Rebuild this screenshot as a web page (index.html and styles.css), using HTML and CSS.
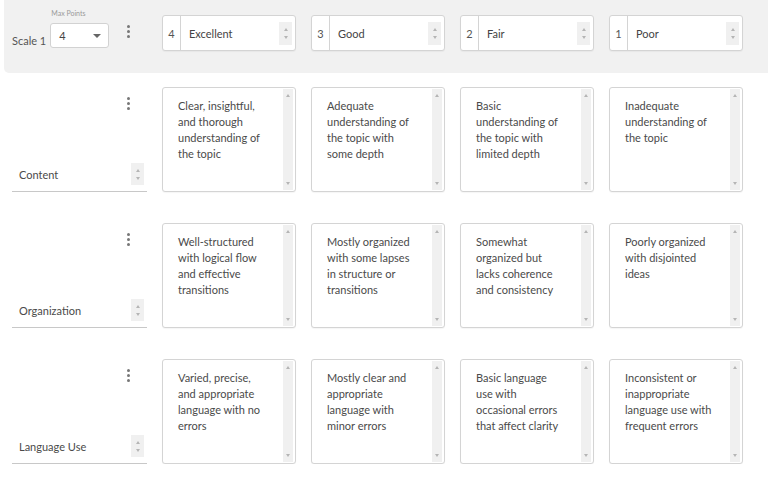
FILE: index.html
```html
<!DOCTYPE html>
<html lang="en">
<head>
    <meta charset="UTF-8">
    <title>Rubric</title>
    <link rel="stylesheet" href="styles.css">
</head>
<body>
    <div class="scale-bar">
        <div class="left-cell scale-controls">
            <span class="scale-name">Scale 1</span>
            <div class="max-points">
                <span class="max-label">Max Points</span>
                <div class="select-box">
                    <span>4</span>
                    <span class="caret"></span>
                </div>
            </div>
            <span class="kebab"><i></i><i></i><i></i></span>
        </div>
        <div class="level">
            <span class="level-num">4</span>
            <span class="level-name">Excellent</span>
            <span class="spinner"><b class="up"></b><b class="down"></b></span>
        </div>
        <div class="level">
            <span class="level-num">3</span>
            <span class="level-name">Good</span>
            <span class="spinner"><b class="up"></b><b class="down"></b></span>
        </div>
        <div class="level">
            <span class="level-num">2</span>
            <span class="level-name">Fair</span>
            <span class="spinner"><b class="up"></b><b class="down"></b></span>
        </div>
        <div class="level">
            <span class="level-num">1</span>
            <span class="level-name">Poor</span>
            <span class="spinner"><b class="up"></b><b class="down"></b></span>
        </div>
    </div>

    <div class="criteria">
        <div class="criterion">
            <div class="left-cell criterion-head">
                <span class="kebab"><i></i><i></i><i></i></span>
                <div class="criterion-field">
                    <span>Content</span>
                    <span class="spinner"><b class="up"></b><b class="down"></b></span>
                </div>
            </div>
            <div class="desc"><p>Clear, insightful, and thorough understanding of the topic</p><span class="track"><b class="up"></b><b class="down"></b></span></div>
            <div class="desc"><p>Adequate understanding of the topic with some depth</p><span class="track"><b class="up"></b><b class="down"></b></span></div>
            <div class="desc"><p>Basic understanding of the topic with limited depth</p><span class="track"><b class="up"></b><b class="down"></b></span></div>
            <div class="desc"><p>Inadequate understanding of the topic</p><span class="track"><b class="up"></b><b class="down"></b></span></div>
        </div>

        <div class="criterion">
            <div class="left-cell criterion-head">
                <span class="kebab"><i></i><i></i><i></i></span>
                <div class="criterion-field">
                    <span>Organization</span>
                    <span class="spinner"><b class="up"></b><b class="down"></b></span>
                </div>
            </div>
            <div class="desc"><p>Well-structured with logical flow and effective transitions</p><span class="track"><b class="up"></b><b class="down"></b></span></div>
            <div class="desc"><p>Mostly organized with some lapses in structure or transitions</p><span class="track"><b class="up"></b><b class="down"></b></span></div>
            <div class="desc"><p>Somewhat organized but lacks coherence and consistency</p><span class="track"><b class="up"></b><b class="down"></b></span></div>
            <div class="desc"><p>Poorly organized with disjointed ideas</p><span class="track"><b class="up"></b><b class="down"></b></span></div>
        </div>

        <div class="criterion">
            <div class="left-cell criterion-head">
                <span class="kebab"><i></i><i></i><i></i></span>
                <div class="criterion-field">
                    <span>Language Use</span>
                    <span class="spinner"><b class="up"></b><b class="down"></b></span>
                </div>
            </div>
            <div class="desc"><p>Varied, precise, and appropriate language with no errors</p><span class="track"><b class="up"></b><b class="down"></b></span></div>
            <div class="desc"><p>Mostly clear and appropriate language with minor errors</p><span class="track"><b class="up"></b><b class="down"></b></span></div>
            <div class="desc"><p>Basic language use with occasional errors that affect clarity</p><span class="track"><b class="up"></b><b class="down"></b></span></div>
            <div class="desc"><p>Inconsistent or inappropriate language use with frequent errors</p><span class="track"><b class="up"></b><b class="down"></b></span></div>
        </div>
    </div>
</body>
</html>
```

FILE: styles.css
```css
body {
    margin: 0;
    font-family: Lato, "Open Sans", sans-serif;
    font-size: 11px;
    color: #4a4a4a;
    background: #fff;
}
.scale-bar {
    display: flex;
    align-items: flex-start;
    gap: 15px;
    height: 73px;
    box-sizing: border-box;
    margin-left: 4px;
    padding: 15px 0 0 8px;
    background: #f1f1f1;
    border-radius: 0 0 0 5px;
}
.left-cell {
    width: 135px;
    flex: none;
}
.scale-controls {
    display: flex;
    align-items: flex-start;
}
.scale-name {
    font-size: 11px;
    line-height: 14px;
    color: #555;
    margin-top: 19px;
    margin-right: 4px;
}
.max-points {
    display: flex;
    flex-direction: column;
    margin-top: -6px;
}
.max-label {
    font-size: 7px;
    line-height: 9px;
    color: #999;
    margin-bottom: 5px;
    padding-left: 1px;
}
.select-box {
    width: 59px;
    height: 25px;
    box-sizing: border-box;
    display: flex;
    align-items: center;
    justify-content: space-between;
    padding: 0 7px 0 8px;
    background: #fff;
    border: 1px solid #d2d2d2;
    border-radius: 3px;
    font-size: 11px;
    color: #444;
}
.caret {
    width: 0;
    height: 0;
    border-left: 4px solid transparent;
    border-right: 4px solid transparent;
    border-top: 4px solid #666;
}
.kebab {
    display: flex;
    flex-direction: column;
    gap: 2px;
    width: 3px;
    margin-left: 18px;
    margin-top: 10px;
}
.kebab i {
    display: block;
    width: 3px;
    height: 3px;
    border-radius: 50%;
    background: #777;
}
.level {
    width: 134px;
    height: 36px;
    box-sizing: border-box;
    flex: none;
    display: flex;
    align-items: center;
    background: #fff;
    border: 1px solid #d4d4d4;
    border-radius: 3px;
    box-shadow: 0 1px 1px rgba(0,0,0,0.04);
}
.level-num {
    width: 17px;
    align-self: stretch;
    display: flex;
    align-items: center;
    justify-content: center;
    border-right: 1px solid #d4d4d4;
    color: #555;
}
.level-name {
    flex: 1;
    padding-left: 8px;
    color: #444;
}
.spinner {
    width: 13px;
    height: 23px;
    margin-right: 3px;
    display: flex;
    flex-direction: column;
    align-items: center;
    justify-content: center;
    gap: 5px;
    background: #f0f0f0;
}
.up, .down {
    display: block;
    width: 0;
    height: 0;
    border-left: 2.5px solid transparent;
    border-right: 2.5px solid transparent;
}
.up {
    border-bottom: 3px solid #b5b5b5;
}
.down {
    border-top: 3px solid #b5b5b5;
}
.criteria {
    padding: 14px 0 0 12px;
    display: flex;
    flex-direction: column;
    gap: 31px;
}
.criterion {
    display: flex;
    gap: 15px;
}
.criterion .left-cell {
    width: 135px;
}
.criterion-head {
    display: flex;
    flex-direction: column;
    justify-content: space-between;
    align-items: flex-end;
    padding-top: 10px;
    box-sizing: border-box;
}
.criterion-head .kebab {
    margin: 0 17px 0 0;
}
.criterion-field {
    align-self: stretch;
    display: flex;
    align-items: center;
    justify-content: space-between;
    padding: 0 3px 6px 7px;
    border-bottom: 1px solid #c8c8c8;
}
.criterion-field .spinner {
    height: 22px;
    margin-right: 0;
}
.desc {
    width: 134px;
    height: 105px;
    box-sizing: border-box;
    flex: none;
    display: flex;
    justify-content: space-between;
    background: #fff;
    border: 1px solid #d4d4d4;
    border-radius: 3px;
    box-shadow: 0 1px 1px rgba(0,0,0,0.04);
}
.desc p {
    width: 90px;
    margin: 0;
    padding: 10px 0 0 15px;
    line-height: 16px;
    font-size: 11px;
    color: #4a4a4a;
}
.track {
    width: 10px;
    margin: 1px 2px 1px 0;
    display: flex;
    flex-direction: column;
    justify-content: space-between;
    align-items: center;
    padding: 5px 0;
    background: #f0f0f0;
}
```
